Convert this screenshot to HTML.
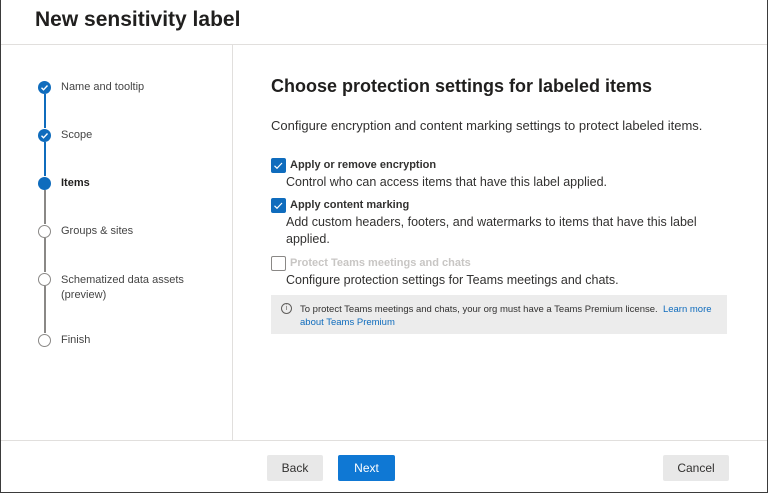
<!DOCTYPE html>
<html><head><style>
*{margin:0;padding:0;box-sizing:border-box}
body{width:768px;height:493px;position:relative;background:#fff;font-family:"Liberation Sans",sans-serif;color:#323130;overflow:hidden}
.frame{position:absolute;left:0;top:0;width:768px;height:493px;border:1px solid #3b3b3b;border-top:none}
.a{position:absolute}
h1{position:absolute;left:35px;top:8px;font-size:21px;font-weight:bold;color:#201f1e}
.step{position:absolute;left:61px;font-size:11px;color:#444}
.dot{position:absolute;left:38px;width:13px;height:13px;border-radius:50%}
.done{background:#0f6cbd}
.todo{border:1.5px solid #8a8886;background:#fff}
.line{position:absolute;left:44px;width:1.5px}
.cb{position:absolute;left:271px;width:15px;height:15px;border-radius:2px}
.on{background:#0f6cbd}
.off{border:1px solid #8a8886}
.lbl{position:absolute;left:290px;font-size:11px;font-weight:bold}
.desc{position:absolute;left:286px;font-size:12.5px;line-height:17px}
.btn{position:absolute;top:455px;height:26px;font-size:12px;text-align:center;line-height:26px;background:#e8e8e8;color:#323130;border-radius:2px}
</style></head><body>
<div class="frame"></div>
<h1>New sensitivity label</h1>
<div class="a" style="left:1px;top:44px;width:766px;height:1px;background:#e1dfdd"></div>
<div class="a" style="left:232px;top:45px;width:1px;height:395px;background:#e1dfdd"></div>
<div class="a" style="left:1px;top:440px;width:766px;height:1px;background:#e1dfdd"></div>

<div class="line" style="top:94px;height:34px;background:#0f6cbd"></div>
<div class="line" style="top:142px;height:34px;background:#0f6cbd"></div>
<div class="line" style="top:190px;height:34px;background:#8a8886"></div>
<div class="line" style="top:238px;height:34px;background:#8a8886"></div>
<div class="line" style="top:286px;height:47px;background:#8a8886"></div>

<div class="dot done" style="top:81px"><svg width="13" height="13"><path d="M3.5 6.8l2 2 4-4.3" stroke="#fff" stroke-width="1.4" fill="none"/></svg></div>
<div class="dot done" style="top:129px"><svg width="13" height="13"><path d="M3.5 6.8l2 2 4-4.3" stroke="#fff" stroke-width="1.4" fill="none"/></svg></div>
<div class="dot done" style="top:177px"></div>
<div class="dot todo" style="top:225px"></div>
<div class="dot todo" style="top:273px"></div>
<div class="dot todo" style="top:334px"></div>

<div class="step" style="top:81px">Name and tooltip</div>
<div class="step" style="top:129px">Scope</div>
<div class="step" style="top:177px;font-weight:bold;color:#201f1e">Items</div>
<div class="step" style="top:225px">Groups &amp; sites</div>
<div class="step" style="top:273px;line-height:15px">Schematized data assets<br>(preview)</div>
<div class="step" style="top:334px">Finish</div>

<div class="a" style="left:271px;top:76px;font-size:18px;font-weight:bold;color:#201f1e">Choose protection settings for labeled items</div>
<div class="a" style="left:271px;top:118px;font-size:13px">Configure encryption and content marking settings to protect labeled items.</div>

<div class="cb on" style="top:158px"><svg width="15" height="15"><path d="M3.5 7.8l2.5 2.5 5-5.3" stroke="#fff" stroke-width="1.2" fill="none"/></svg></div>
<div class="lbl" style="top:159px">Apply or remove encryption</div>
<div class="desc" style="top:174px">Control who can access items that have this label applied.</div>

<div class="cb on" style="top:198px"><svg width="15" height="15"><path d="M3.5 7.8l2.5 2.5 5-5.3" stroke="#fff" stroke-width="1.2" fill="none"/></svg></div>
<div class="lbl" style="top:199px">Apply content marking</div>
<div class="desc" style="top:214px">Add custom headers, footers, and watermarks to items that have this label<br>applied.</div>

<div class="cb off" style="top:256px"></div>
<div class="lbl" style="top:257px;color:#c8c6c4">Protect Teams meetings and chats</div>
<div class="desc" style="top:272px">Configure protection settings for Teams meetings and chats.</div>

<div class="a" style="left:271px;top:295px;width:456px;height:39px;background:#ececec"></div>
<div class="a" style="left:281px;top:303px;width:11px;height:11px;border:1px solid #605e5c;border-radius:50%;font-size:7px;text-align:center;line-height:9px;color:#605e5c">i</div>
<div class="a" style="left:300px;top:303px;font-size:9.5px;line-height:13px;width:420px">To protect Teams meetings and chats, your org must have a Teams Premium license. &nbsp;<span style="color:#0f6cbd">Learn more about Teams Premium</span></div>

<div class="btn" style="left:267px;width:56px">Back</div>
<div class="btn" style="left:338px;width:57px;background:#0f78d4;color:#fff">Next</div>
<div class="btn" style="left:663px;width:66px">Cancel</div>
</body></html>
